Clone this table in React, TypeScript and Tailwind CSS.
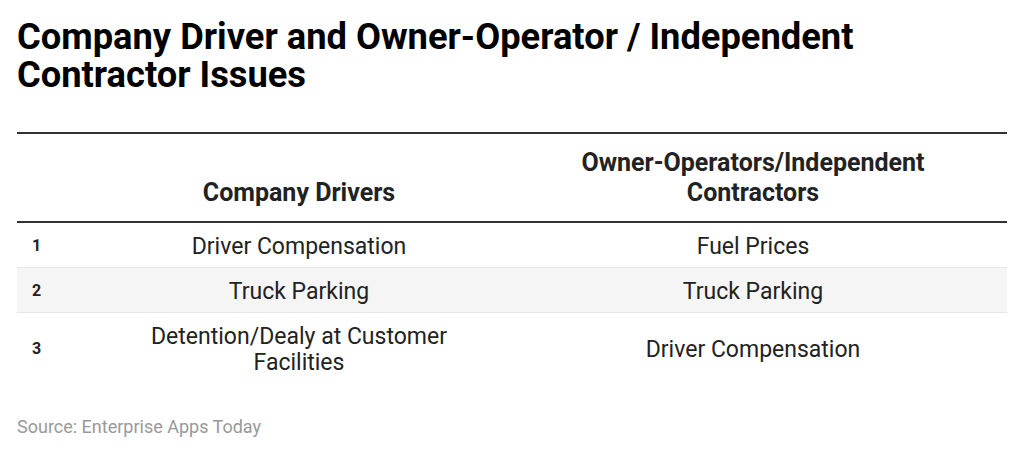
import React from "react";

const rows = [
  { n: "1", a: "Driver Compensation", b: "Fuel Prices", shade: false },
  { n: "2", a: "Truck Parking", b: "Truck Parking", shade: true },
  { n: "3", a: "Detention/Dealy at Customer Facilities", b: "Driver Compensation", shade: false },
];

export default function App() {
  return (
    <div
      className="w-[1024px] h-[454px] bg-white px-[17px] pt-[18px] overflow-hidden"
      style={{ fontFamily: "Roboto, 'Liberation Sans', sans-serif" }}
    >
      <h1 className="text-[36.3px] leading-[38px] font-bold text-black w-[900px]">
        Company Driver and Owner-Operator / Independent Contractor Issues
      </h1>
      <div className="mt-[38px] w-[990px] border-t-2 border-[#333333]">
        <div className="grid grid-cols-[82px_400px_1fr] border-b-2 border-[#333333] items-end">
          <div />
          <div className="pb-[13px] text-center text-[25px] leading-[30px] font-bold text-[#222222]">
            Company Drivers
          </div>
          <div className="pt-[14px] pb-[13px] px-[60px] text-center text-[25px] leading-[30px] font-bold text-[#222222]">
            Owner-Operators/Independent Contractors
          </div>
        </div>
        {rows.map((r, i) => (
          <div
            key={r.n}
            className={`grid grid-cols-[82px_400px_1fr] items-center ${
              i < 2 ? "border-b border-[#e8e8e8]" : ""
            } ${r.shade ? "bg-[#f5f5f5]" : "bg-white"}`}
          >
            <div className="pl-[15px] pt-[2px] text-[16px] font-bold text-[#222222]">{r.n}</div>
            <div className="pt-[11px] pb-[7px] px-[40px] text-center text-[23px] leading-[26px] text-[#222222]">
              {r.a}
            </div>
            <div className="pt-[11px] pb-[7px] px-[40px] text-center text-[23px] leading-[26px] text-[#222222]">
              {r.b}
            </div>
          </div>
        ))}
      </div>
      <div className="mt-[32px] text-[18px] leading-[24px] text-[#999999]">
        Source: Enterprise Apps Today
      </div>
    </div>
  );
}
